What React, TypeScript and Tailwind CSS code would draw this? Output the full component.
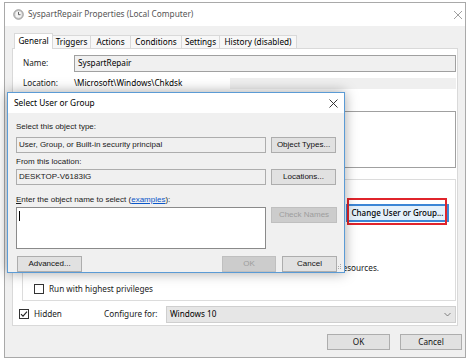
import React from 'react';

function WinButton({ label, className = '', disabled = false }: { label: string; className?: string; disabled?: boolean }) {
  return (
    <div
      className={`flex items-center justify-center border ${
        disabled ? 'border-[#bfbfbf] bg-[#cccccc] text-[#9d9d9d]' : 'border-[#adadad] bg-[#e1e1e1] text-[#111]'
      } ${className}`}
    >
      {label}
    </div>
  );
}

function Check({ checked = false }: { checked?: boolean }) {
  return (
    <div className="flex h-[10px] w-[10px] items-center justify-center border border-[#333] bg-white">
      {checked && (
        <svg width="8" height="8" viewBox="0 0 8 8">
          <path d="M1 4.2 L3 6.2 L7 1.6" fill="none" stroke="#222" strokeWidth="1.1" />
        </svg>
      )}
    </div>
  );
}

function SelectUserDialog() {
  return (
    <div className="absolute left-[7px] top-[92px] flex h-[181px] w-[338px] flex-col border border-[#5b9bd5] bg-[#f0f0f0] font-['Liberation_Sans',Arial,sans-serif] text-[8px] text-[#1a1a1a] shadow-[0_0_12px_rgba(0,0,0,0.35)]">
      {/* Title */}
      <div className="flex h-[22px] items-center justify-between bg-white pl-[6px] pr-[6px] font-['Noto_Sans',sans-serif] text-[8.3px] text-black">
        <span>Select User or Group</span>
        <svg width="9" height="9" viewBox="0 0 9 9">
          <path d="M0.5 0.5 L8.5 8.5 M8.5 0.5 L0.5 8.5" stroke="#222" strokeWidth="0.9" />
        </svg>
      </div>

      <div className="flex flex-col pl-[8px] pr-[7px]">
        <div className="mt-[9px] leading-[10px]">Select this object type:</div>
        <div className="mt-[5px] flex gap-[5px]">
          <div className="flex h-[16px] w-[250px] items-center border border-[#adadad] bg-[#f0f0f0] pl-[2px]">
            User, Group, or Built-in security principal
          </div>
          <WinButton label="Object Types..." className="h-[16px] w-[65px]" />
        </div>

        <div className="mt-[4px] leading-[10px]">From this location:</div>
        <div className="mt-[2px] flex gap-[5px]">
          <div className="flex h-[16px] w-[250px] items-center border border-[#adadad] bg-[#f0f0f0] pl-[2px]">
            DESKTOP-V6183IG
          </div>
          <WinButton label="Locations..." className="h-[16px] w-[65px]" />
        </div>

        <div className="mt-[10px] leading-[10px]">
          <span className="underline">E</span>nter the object name to select (
          <span className="text-[#0b57c9] underline">examples</span>):
        </div>
        <div className="mt-[2px] flex gap-[5px]">
          <div className="h-[42px] w-[250px] border border-[#8a8a8a] bg-white pl-[2px] pt-[3px]">
            <div className="h-[10px] w-px bg-black" />
          </div>
          <WinButton label="Check Names" disabled className="h-[16px] w-[66px]" />
        </div>

        <div className="mt-[7px] flex items-center">
          <WinButton label="Advanced..." className="ml-[1px] h-[16px] w-[65px]" />
          <div className="flex-1" />
          <WinButton label="OK" disabled className="h-[16px] w-[54px]" />
          <WinButton label="Cancel" className="ml-[6px] h-[16px] w-[55px]" />
        </div>
      </div>

      {/* resize grip */}
      <svg className="absolute bottom-[2px] right-[2px]" width="6" height="6" viewBox="0 0 6 6">
        <rect x="4" y="0" width="1" height="1" fill="#aaa" />
        <rect x="2" y="2" width="1" height="1" fill="#aaa" />
        <rect x="4" y="2" width="1" height="1" fill="#aaa" />
        <rect x="0" y="4" width="1" height="1" fill="#aaa" />
        <rect x="2" y="4" width="1" height="1" fill="#aaa" />
        <rect x="4" y="4" width="1" height="1" fill="#aaa" />
      </svg>
    </div>
  );
}

const tabs = [
  { label: 'Triggers', w: 'w-[38px]' },
  { label: 'Actions', w: 'w-[40px]' },
  { label: 'Conditions', w: 'w-[51px]' },
  { label: 'Settings', w: 'w-[38px]' },
  { label: 'History (disabled)', w: 'w-[77px]' },
];

export default function App() {
  return (
    <div className="relative h-[360px] w-[474px] overflow-hidden bg-white font-['Noto_Sans',sans-serif] text-[8.2px] text-[#1a1a1a]">
      {/* Properties window */}
      <div className="ml-[4px] mt-[2px] flex h-[356px] w-[462px] flex-col border border-[#a9a9a9] bg-[#f0f0f0]">
        {/* Title bar */}
        <div className="flex h-[23px] items-center bg-white pl-[8px] pr-[2px]">
          <svg width="11" height="11" viewBox="0 0 11 11">
            <circle cx="5.5" cy="5.5" r="4.8" fill="#c9c9c9" stroke="#8c8c8c" strokeWidth="0.8" />
            <circle cx="5.5" cy="5.5" r="3.2" fill="#f4f4f4" />
            <path d="M5.5 3 V5.7 H7.5" fill="none" stroke="#555" strokeWidth="0.9" />
          </svg>
          <span className="ml-[4px] text-[8.3px] text-[#555]">SyspartRepair Properties (Local Computer)</span>
          <div className="flex-1" />
          <svg width="10" height="10" viewBox="0 0 10 10">
            <path d="M1 1 L9 9 M9 1 L1 9" stroke="#888" strokeWidth="0.8" />
          </svg>
        </div>

        {/* Tabs */}
        <div className="ml-[9px] mt-[7px] flex h-[15px] items-end">
          <div className="relative z-10 -mb-px flex h-[16px] w-[39px] items-center justify-center border border-b-0 border-[#d9d9d9] bg-white text-black">
            General
          </div>
          {tabs.map((t) => (
            <div
              key={t.label}
              className={`flex h-[13px] items-center justify-center border-r border-t border-[#d9d9d9] bg-[#f7f7f7] text-black ${t.w}`}
            >
              {t.label}
            </div>
          ))}
        </div>

        {/* Tab panel */}
        <div className="ml-[7px] flex h-[278px] w-[446px] flex-col border border-[#d9d9d9] bg-white pl-[9px] pr-[1px]">
          <div className="mt-[6px] flex items-center">
            <span className="w-[52px] pl-px">Name:</span>
            <div className="flex h-[17px] flex-1 items-center border border-[#a0a0a0] bg-[#f0f0f0] pl-[3px] text-black">
              SyspartRepair
            </div>
          </div>
          <div className="mt-[5px] flex h-[12px] items-center">
            <span className="w-[52px] pl-px">Location:</span>
            <span className="text-black">\Microsoft\Windows\Chkdsk</span>
            <div className="ml-[48px] h-[11px] flex-1 bg-[#efefef]" />
          </div>
          {/* Description box */}
          <div className="ml-[52px] mt-[22px] h-[57px] border border-[#a0a0a0] bg-white" />

          {/* Security options */}
          <div className="mt-[11px] flex h-[122px] flex-col border border-[#dcdcdc] pl-[6px]">
            <div className="mt-[24px] flex items-center justify-end">
              <div className="relative mr-[6px]">
                <div className="flex h-[18px] w-[103px] items-center justify-center whitespace-nowrap border-2 border-[#3c86d6] bg-[#e5f1fb] text-[8px] font-medium text-black">
                  Change User or Group...
                </div>
                <div className="absolute -top-[6px] bottom-[-3px] left-[1px] right-[2px] border-2 border-[#e0242b]" />
              </div>
            </div>
            <div className="mt-[40px] flex h-[12px] w-[350px] items-center justify-end overflow-hidden whitespace-nowrap">
              <span>Do not store password. The task will only have access to local computer resources.</span>
            </div>
            <div className="mt-[9px] flex items-center gap-[5px] pl-[5px]">
              <Check />
              <span>Run with highest privileges</span>
            </div>
          </div>

          <div className="mt-[5px] flex items-center">
            <div className="ml-[-3px] flex w-[85px] items-center gap-[5px]">
              <Check checked />
              <span>Hidden</span>
            </div>
            <span className="w-[62px]">Configure for:</span>
            <div className="flex h-[17px] flex-1 items-center justify-between border border-[#cfcfcf] bg-[#e6e6e6] pl-[3px] pr-[4px] text-black">
              <span>Windows 10</span>
              <svg width="7" height="5" viewBox="0 0 7 5">
                <path d="M0.5 1 L3.5 4 L6.5 1" fill="none" stroke="#666" strokeWidth="0.8" />
              </svg>
            </div>
          </div>
        </div>

        {/* Bottom buttons */}
        <div className="mt-[8px] flex justify-end gap-[10px] pr-[3px]">
          <WinButton label="OK" className="h-[16px] w-[63px]" />
          <WinButton label="Cancel" className="h-[16px] w-[62px]" />
        </div>
      </div>

      <SelectUserDialog />
    </div>
  );
}
